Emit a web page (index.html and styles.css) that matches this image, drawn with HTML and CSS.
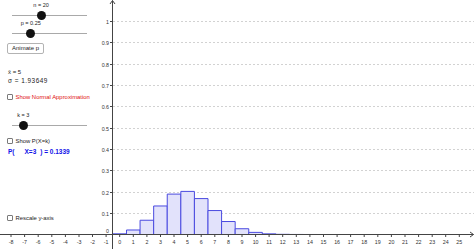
FILE: index.html
```html
<!DOCTYPE html>
<html lang="en">
<head>
<meta charset="utf-8">
<title>Binomial Distribution</title>
<link rel="stylesheet" href="styles.css">
</head>
<body>
<div class="applet">
  <svg class="graph" width="474" height="249" viewBox="0 0 474 249">
    <g class="grid">
      <path d="M113 213.5H474M113 192.5H474M113 170.5H474M113 149.5H474M113 128.5H474M113 106.5H474M113 85.5H474M113 64.5H474M113 42.5H474M113 21.5H474"/>
    </g>
    <g class="bars" transform="translate(112.9075,234.5) scale(13.585,-213)">
      <rect x="0" y="0" width="1" height="0.00317"/>
      <rect x="1" y="0" width="1" height="0.02114"/>
      <rect x="2" y="0" width="1" height="0.06695"/>
      <rect x="3" y="0" width="1" height="0.13390"/>
      <rect x="4" y="0" width="1" height="0.18969"/>
      <rect x="5" y="0" width="1" height="0.20233"/>
      <rect x="6" y="0" width="1" height="0.16861"/>
      <rect x="7" y="0" width="1" height="0.11241"/>
      <rect x="8" y="0" width="1" height="0.06089"/>
      <rect x="9" y="0" width="1" height="0.02706"/>
      <rect x="10" y="0" width="1" height="0.00992"/>
      <rect x="11" y="0" width="1" height="0.00301"/>
      <rect x="12" y="0" width="1" height="0.00075"/>
      <rect x="13" y="0" width="1" height="0.00015"/>
      <rect x="14" y="0" width="1" height="0.00002"/>
      <rect x="15" y="0" width="1" height="0"/>
      <rect x="16" y="0" width="1" height="0"/>
      <rect x="17" y="0" width="1" height="0"/>
      <rect x="18" y="0" width="1" height="0"/>
      <rect x="19" y="0" width="1" height="0"/>
      <rect x="20" y="0" width="1" height="0"/>
    </g>
    <g class="axes">
      <path d="M0 234.5H473.5M112.5 0.5V249"/>
      <path d="M470 232L473.5 234.5L470 237M110 4L112.5 0.5L115 4"/>
      <path d="M11 234.5v2.5M24.6 234.5v2.5M38.2 234.5v2.5M51.8 234.5v2.5M65.4 234.5v2.5M79 234.5v2.5M92.5 234.5v2.5M106.1 234.5v2.5M119.7 234.5v2.5M133.3 234.5v2.5M146.9 234.5v2.5M160.5 234.5v2.5M174 234.5v2.5M187.6 234.5v2.5M201.2 234.5v2.5M214.8 234.5v2.5M228.4 234.5v2.5M242 234.5v2.5M255.6 234.5v2.5M269.1 234.5v2.5M282.7 234.5v2.5M296.3 234.5v2.5M309.9 234.5v2.5M323.5 234.5v2.5M337.1 234.5v2.5M350.6 234.5v2.5M364.2 234.5v2.5M377.8 234.5v2.5M391.4 234.5v2.5M405 234.5v2.5M418.6 234.5v2.5M432.2 234.5v2.5M445.7 234.5v2.5M459.3 234.5v2.5"/>
      <path d="M110 213.5h2.5M110 192.5h2.5M110 170.5h2.5M110 149.5h2.5M110 128.5h2.5M110 106.5h2.5M110 85.5h2.5M110 64.5h2.5M110 42.5h2.5M110 21.5h2.5"/>
    </g>
    <g class="xlabels">
      <text x="11" y="243.5">-8</text>
      <text x="24.6" y="243.5">-7</text>
      <text x="38.2" y="243.5">-6</text>
      <text x="51.8" y="243.5">-5</text>
      <text x="65.4" y="243.5">-4</text>
      <text x="79" y="243.5">-3</text>
      <text x="92.5" y="243.5">-2</text>
      <text x="106.1" y="243.5">-1</text>
      <text x="119.7" y="243.5">0</text>
      <text x="133.3" y="243.5">1</text>
      <text x="146.9" y="243.5">2</text>
      <text x="160.5" y="243.5">3</text>
      <text x="174" y="243.5">4</text>
      <text x="187.6" y="243.5">5</text>
      <text x="201.2" y="243.5">6</text>
      <text x="214.8" y="243.5">7</text>
      <text x="228.4" y="243.5">8</text>
      <text x="242" y="243.5">9</text>
      <text x="255.6" y="243.5">10</text>
      <text x="269.1" y="243.5">11</text>
      <text x="282.7" y="243.5">12</text>
      <text x="296.3" y="243.5">13</text>
      <text x="309.9" y="243.5">14</text>
      <text x="323.5" y="243.5">15</text>
      <text x="337.1" y="243.5">16</text>
      <text x="350.6" y="243.5">17</text>
      <text x="364.2" y="243.5">18</text>
      <text x="377.8" y="243.5">19</text>
      <text x="391.4" y="243.5">20</text>
      <text x="405" y="243.5">21</text>
      <text x="418.6" y="243.5">22</text>
      <text x="432.2" y="243.5">23</text>
      <text x="445.7" y="243.5">24</text>
      <text x="459.3" y="243.5">25</text>
    </g>
    <g class="ylabels">
      <text x="109" y="232.5">0</text>
      <text x="109" y="215.5">0.1</text>
      <text x="109" y="194.5">0.2</text>
      <text x="109" y="172.5">0.3</text>
      <text x="109" y="151.5">0.4</text>
      <text x="109" y="130.5">0.5</text>
      <text x="109" y="108.5">0.6</text>
      <text x="109" y="87.5">0.7</text>
      <text x="109" y="66.5">0.8</text>
      <text x="109" y="44.5">0.9</text>
      <text x="109" y="23.5">1</text>
    </g>
  </svg>

  <div class="panel">
    <div class="slider">
      <span class="slider-label" style="left:38.8%">n = 20</span>
      <span class="track"></span>
      <span class="knob" style="left:38.8%"></span>
    </div>
    <div class="slider">
      <span class="slider-label" style="left:25%">p = 0.25</span>
      <span class="track"></span>
      <span class="knob" style="left:25%"></span>
    </div>
    <button class="btn" type="button">Animate p</button>

    <div class="stat stat-first">x&#772; = 5</div>
    <div class="stat stat-sigma">σ = 1.93649</div>

    <label class="check check-normal"><span class="box"></span><span class="red">Show Normal Approximation</span></label>

    <div class="slider slider-k">
      <span class="slider-label" style="left:15%">k = 3</span>
      <span class="track"></span>
      <span class="knob" style="left:15%"></span>
    </div>

    <label class="check check-p"><span class="box"></span><span>Show P(X=k)</span></label>
    <div class="prob"><span class="p-open">P(</span><span class="p-x">X=3</span><span>) = 0.1339</span></div>

    <label class="check check-rescale"><span class="box"></span><span>Rescale y-axis</span></label>
  </div>
</div>
</body>
</html>
```

FILE: styles.css
```css
html, body {
  margin: 0;
  padding: 0;
  background: #fff;
}

body {
  font-family: "Liberation Sans", Arial, sans-serif;
  color: #1a1a1a;
}

.applet {
  position: relative;
  width: 474px;
  height: 249px;
  overflow: hidden;
  background: #fff;
}

.graph {
  position: absolute;
  left: 0;
  top: 0;
}

.grid path {
  fill: none;
  stroke: #d2d2d2;
  stroke-width: 1;
  stroke-dasharray: 2 2;
}

.bars rect {
  fill: #e2e2fb;
  stroke: #4a4ae0;
  stroke-width: 1;
  vector-effect: non-scaling-stroke;
}

.axes path {
  fill: none;
  stroke: #444;
  stroke-width: 1;
}

.xlabels text,
.ylabels text {
  font-family: "Liberation Sans", Arial, sans-serif;
  font-size: 5.3px;
  fill: #333;
}

.xlabels text {
  text-anchor: middle;
}

.ylabels text {
  text-anchor: end;
}

.panel {
  position: relative;
  display: flex;
  flex-direction: column;
  align-items: flex-start;
  width: 100px;
  padding-top: 1px;
}

.slider {
  position: relative;
  width: 75px;
  height: 18px;
  margin-left: 12px;
}

.slider-label {
  position: absolute;
  top: 0;
  transform: translateX(-50%);
  font-size: 5.5px;
  line-height: 8px;
  white-space: nowrap;
  color: #222;
}

.track {
  position: absolute;
  left: 0;
  right: 0;
  top: 14px;
  height: 1px;
  background: #a9a9a9;
}

.knob {
  position: absolute;
  top: 10px;
  width: 9px;
  height: 9px;
  margin-left: -4.5px;
  border-radius: 50%;
  background: #111;
}

.btn {
  margin: 6px 0 0 7px;
  width: 37px;
  height: 11px;
  box-sizing: border-box;
  padding: 0;
  border: 1px solid #b3b3b3;
  border-radius: 2px;
  background: #fff;
  font-family: "Liberation Sans", Arial, sans-serif;
  font-size: 6px;
  line-height: 9px;
  color: #222;
}

.stat {
  margin-left: 8px;
  font-size: 6px;
  line-height: 7.5px;
  white-space: nowrap;
}

.stat-first {
  margin-top: 15px;
}

.stat-sigma {
  font-size: 6.4px;
  letter-spacing: 0.5px;
}

.check {
  display: flex;
  align-items: center;
  gap: 2.5px;
  margin-left: 7px;
  height: 8px;
  font-size: 5.9px;
  white-space: nowrap;
}

.box {
  width: 6px;
  height: 6px;
  box-sizing: border-box;
  border: 1px solid #7a7a7a;
  border-radius: 1px;
  background: #fff;
}

.red {
  color: #e01010;
}

.check-normal {
  margin-top: 9px;
}

.slider-k {
  margin-top: 10px;
}

.check-p {
  margin-top: 7.5px;
}

.prob {
  margin: 3.5px 0 0 8px;
  font-size: 6.5px;
  line-height: 8px;
  font-weight: bold;
  color: #1010e8;
  white-space: nowrap;
}

.p-open {
  margin-right: 10px;
}

.p-x {
  margin-right: 4px;
}

.check-rescale {
  margin-top: 57.5px;
}
```
